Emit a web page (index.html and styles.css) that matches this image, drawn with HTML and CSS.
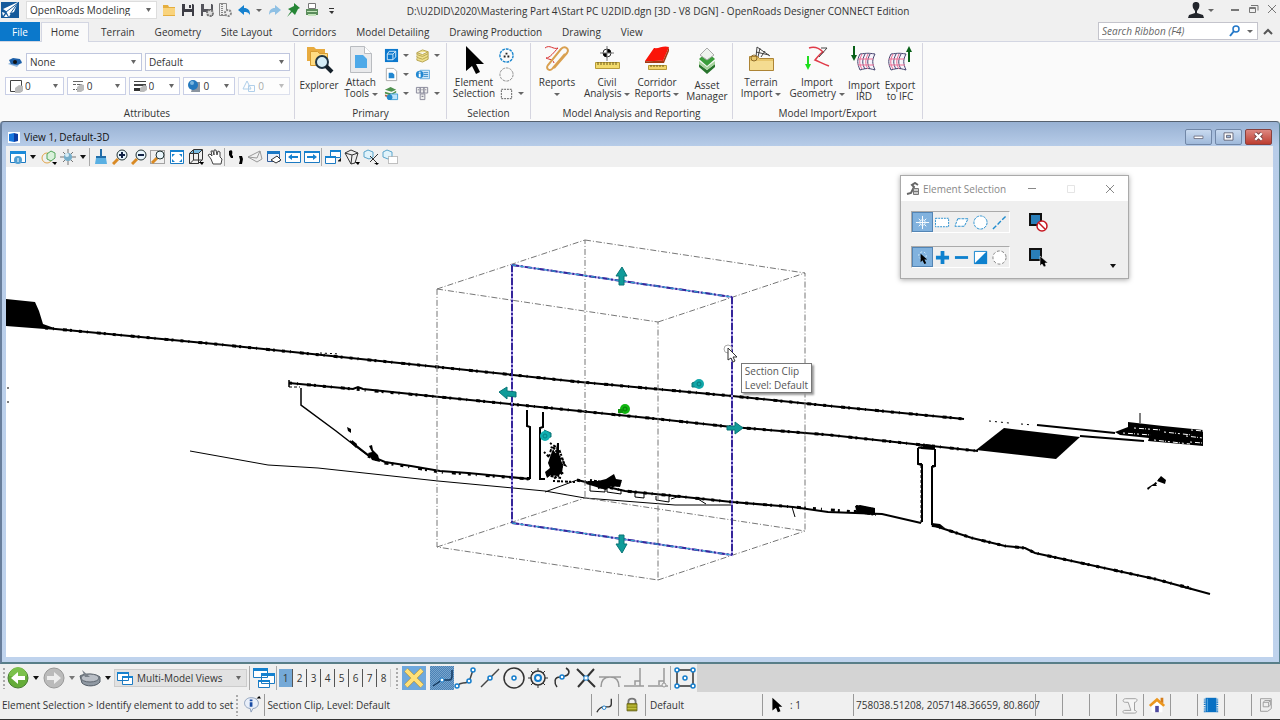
FILE: index.html
```html
<!DOCTYPE html>
<html lang="en">
<head>
  <meta charset="UTF-8" />
  <meta name="viewport" content="width=device-width, initial-scale=1.0"/>
  <title>OpenRoads Designer CONNECT Edition</title>
  <link rel="stylesheet" href="styles.css">
</head>
<body>

  <!-- TITLE BAR -->
  <header class="titlebar">
    <div class="quick-access">
      <svg class="logo" viewBox="0 0 18 18"><path fill="#155a9b" d="M0 1h18v16H0z"/><path fill="#fff" d="M17 1 2 8l3 2 3 6 2-4 3-1zM1 11l3 1-2 3zM5 13l2 3H3z"/><path stroke="#155a9b" fill="none" d="M5 11 17 2 9 13"/></svg>
      <select class="combo workflow" aria-label="Workflow"><option>OpenRoads Modeling</option></select>
      <button class="qa" aria-label="Open"><svg viewBox="0 0 16 16"><path fill="#e5ae3f" d="M2 3h5l1 2h6v9H2z"/><path fill="#f9d37c" d="M2 6h12v7H2z"/></svg></button>
      <button class="qa" aria-label="Save"><svg viewBox="0 0 16 16"><path fill="#3d3d45" d="M2 2h11l1 1v11H2z"/><path fill="#eee" d="M5 2h7v5H5zM4 10h8v4H4z"/><path fill="#3d3d45" d="M9 3h2v3H9z"/></svg></button>
      <button class="qa" aria-label="Save settings"><svg viewBox="0 0 16 16"><path fill="#55555c" d="M2 2h11l1 1v11H2z"/><path fill="#eee" d="M5 2h7v5H5zM4 10h4v4H4z"/><circle cx="11" cy="11" r="3" fill="#ddd" stroke="#777" stroke-width="2" stroke-dasharray="2 1"/></svg></button>
      <button class="qa" aria-label="Compress"><svg viewBox="0 0 16 16"><path fill="#eee" stroke="#888" d="M2.500 1.500h7v12h-7z"/><path stroke="#888" stroke-width="2" stroke-dasharray="1 1" d="M5 2v11"/><circle cx="11" cy="11" r="3" fill="#eee" stroke="#888" stroke-width="2" stroke-dasharray="2 1"/></svg></button>
      <button class="qa" aria-label="Undo"><svg viewBox="0 0 16 16"><path fill="#1581cf" d="M2 8l6-5v3c4 0 6 2 6 7-2-3-3-3-6-3v3z"/></svg></button>
      <span class="caret"></span>
      <button class="qa" aria-label="Redo"><svg viewBox="0 0 16 16"><path fill="#8fc0e4" d="M14 8L8 3v3c-4 0-6 2-6 7 2-3 3-3 6-3v3z"/></svg></button>
      <button class="qa" aria-label="Pin"><svg viewBox="0 0 16 16"><path fill="#268636" d="M9 1l6 5-2 1-2 4-1 2-3-3-5 5 4-6-3-2 2-1 4-2z"/></svg></button>
      <button class="qa" aria-label="Print"><svg viewBox="0 0 16 16"><path fill="#fff" stroke="#777" d="M4.500 1.500h7v5h-7z"/><path fill="#5b8d5c" d="M2 7h12v6H2z"/><path fill="#c3e4bb" d="M3 9h10v1H3zM4 12h8v2H4z"/></svg></button>
      <button class="qa" aria-label="Customize"><svg viewBox="0 0 16 16"><path fill="#333" d="M6 6h5v1H6zM6 9h5l-2 3z"/></svg></button>
    </div>
    <h1 class="doc-title">D:\U2DID\2020\Mastering Part 4\Start PC U2DID.dgn [3D - V8 DGN] - OpenRoads Designer CONNECT Edition</h1>
    <div class="win-controls">
      <button aria-label="Account"><svg viewBox="0 0 16 16"><path fill="#22252b" d="M8 0c3 0 4 2 3 6L9 9v2l6 2 1 3H0l1-3 6-2V9L5 6C4 2 5 0 8 0z"/></svg></button>
      <span class="caret"></span>
      <button aria-label="Minimize"><svg viewBox="0 0 16 16"><path fill="#777" d="M5 7h8v2H5z"/></svg></button>
      <button aria-label="Restore"><svg viewBox="0 0 16 16"><path fill="none" stroke="#777" d="M4.500 5.500h6v5h-6zM4 6.500h7M6 3.500h7v5"/></svg></button>
      <button aria-label="Close"><svg viewBox="0 0 16 16"><path stroke="#777" d="M4 3l8 8M12 3l-8 8"/></svg></button>
    </div>
  </header>

  <!-- RIBBON TABS -->
  <nav class="tabs">
    <a class="tab file" href="#">File</a>
    <a class="tab active" href="#">Home</a>
    <a class="tab" href="#">Terrain</a>
    <a class="tab" href="#">Geometry</a>
    <a class="tab" href="#">Site Layout</a>
    <a class="tab" href="#">Corridors</a>
    <a class="tab" href="#">Model Detailing</a>
    <a class="tab" href="#">Drawing Production</a>
    <a class="tab" href="#">Drawing</a>
    <a class="tab" href="#">View</a>
    <div class="search">
      <input type="text" placeholder="Search Ribbon (F4)" aria-label="Search Ribbon">
      <svg viewBox="0 0 12 12"><circle cx="7" cy="4" r="3" fill="none" stroke="#2277c8" stroke-width="1.500"/><path stroke="#2277c8" stroke-width="2" d="M5 6l-4 5"/></svg>
      <span class="caret"></span>
    </div>
    <button class="collapse" aria-label="Collapse ribbon"><svg viewBox="0 0 12 12"><path fill="none" stroke="#555" stroke-width="2" d="M2 8l4-4 4 4"/></svg></button>
  </nav>

  <!-- RIBBON -->
  <section class="ribbon">
    <div class="group attributes">
      <div class="attr-grid">
        <div class="attr-row">
          <svg class="attr-icon" viewBox="0 0 16 16"><path fill="#8eb6df" d="M1 10l8-5 6 2-5 6z"/><path fill="#1d5fa8" d="M2 6l4-2 7 1 2 4-5 2-6-1z"/><circle cx="8" cy="8" r="2" fill="#111"/></svg>
          <select class="combo template" aria-label="Template"><option>None</option></select>
          <select class="combo level" aria-label="Level"><option>Default</option></select>
        </div>
        <div class="attr-row second">
          <label class="attr wide"><svg viewBox="0 0 16 16"><path fill="#fff" stroke="#444" d="M2.500 2.500h11v11h-11z"/><path fill="#bbb" d="M7 10l4-3 4 1v5l-3 2H7z"/></svg><select aria-label="Color"><option>0</option></select></label>
          <label class="attr wide"><svg viewBox="0 0 16 16"><path stroke="#666" d="M3 3.500h10M3 6.500h3m1 0h5M3 11.500h2m1 0h3"/><path fill="#bbb" d="M7 9l4-3 3 1v5l-3 2H7z"/></svg><select aria-label="Line style"><option>0</option></select></label>
          <label class="attr"><svg viewBox="0 0 16 16"><path stroke="#444" d="M2 3.500h12"/><path stroke="#444" stroke-width="2" d="M2 7h12"/><path stroke="#333" stroke-width="3" d="M2 11.500h9"/><path fill="#bbb" d="M8 10l4-3 3 1v4l-3 2H8z"/></svg><select aria-label="Weight"><option>0</option></select></label>
          <label class="attr"><svg viewBox="0 0 16 16"><path fill="#8b95a0" d="M8 4h6v10H5z"/><circle cx="7" cy="7" r="5" fill="#2378bd"/><circle cx="6" cy="5" r="2" fill="#78b5de"/></svg><select aria-label="Transparency"><option>0</option></select></label>
          <label class="attr muted"><svg viewBox="0 0 16 16"><path fill="none" stroke="#7fb4e0" d="M2 11l4-8 4 8zM7.500 7.500h6v6h-6z"/></svg><select aria-label="Priority" disabled><option>0</option></select></label>
        </div>
      </div>
      <h2>Attributes</h2>
    </div>

    <div class="group primary">
      <div class="tools">
        <button class="big explorer"><svg viewBox="0 0 32 32"><path fill="#e8ab3f" d="M4 3h7l2 2h9v12H4z"/><path fill="#ffdc83" stroke="#d69c32" d="M7.500 7.500h7l2 2h8v12h-17z"/><circle cx="19" cy="18" r="6" fill="#d5edf8" stroke="#203545" stroke-width="2"/><path stroke="#15202a" stroke-width="4" d="M23 22l6 6"/></svg><span>Explorer</span></button>
        <button class="big menu attach"><svg viewBox="0 0 32 32"><path fill="#e9eaec" stroke="#b9bcc0" d="M5.500 2.500h14l7 7v19h-21z"/><path fill="#fff" stroke="#b9bcc0" d="M19.500 2.500v7h7"/><path fill="#4ea9e8" d="M10 11h8l4 4v9H10z"/></svg><span>Attach<br>Tools <i class="caret"></i></span></button>
        <div class="minis">
          <button aria-label="Models"><svg viewBox="0 0 16 16"><path fill="#0b78cd" d="M1 1h14v14H1z"/><path fill="none" stroke="#d7ecfb" d="M3.500 6.500h6v6h-6zM3.500 6.500l2-3h7l-3 3m0 6l3-3v-6"/></svg><i class="caret"></i></button>
          <button aria-label="Level display"><svg viewBox="0 0 16 16"><path fill="#efe08c" stroke="#b5a24e" d="M2 5l6-3 6 2-6 3zM2 5v2l6 2 6-3V4M2 8v2l6 2 6-3V6M2 11v2l6 2 6-3V9"/></svg><i class="caret"></i></button>
          <button aria-label="References"><svg viewBox="0 0 16 16"><path fill="#fff" stroke="#aaa" d="M2.500 1.500h8l3 3v10h-11z"/><path fill="#2187d0" d="M5 6h4l2 2v4H5z"/></svg><i class="caret"></i></button>
          <button aria-label="Properties"><svg viewBox="0 0 16 16"><path fill="#d2eafa" stroke="#65addd" d="M5.500 3.500h10v9h-10z"/><path stroke="#388bc8" d="M9 6h5m-5 2h5m-5 2h5"/><circle cx="5" cy="8" r="4" fill="#2188d2"/><path stroke="#fff" stroke-width="2" d="M5 5v1m0 1v4"/></svg></button>
          <button aria-label="Layers"><svg viewBox="0 0 16 16"><path fill="#4f914e" d="M1 4l6-3 6 3-5 2zM1 6l7 2 5-3v2l-6 3-6-2z"/><path fill="#b3624a" d="M1 9l6 2v2l-6-2z"/><path fill="#bce3fa" stroke="#3d9ed4" d="M6.500 8.500h8v6h-8z"/><circle cx="6" cy="12" r="3" fill="#258acb"/></svg><i class="caret"></i></button>
          <button aria-label="Key-in"><svg viewBox="0 0 16 16"><path fill="#eee" stroke="#889" d="M1.500 1.500h4v6h-4zM5.500 1.500h4v6h-4zM9.500 1.500h4v6h-4zM5.500 8.500h5v6h-5z"/><path stroke="#667" d="M3 4h1m3 0h1m3 0h1M7 11h2"/></svg><i class="caret"></i></button>
        </div>
      </div>
      <h2>Primary</h2>
    </div>

    <div class="group selection">
      <div class="tools">
        <button class="big menu"><svg viewBox="0 0 32 32"><path d="M8 2v25l6-5 4 8 4-2-4-8h8z"/></svg><span>Element<br>Selection</span></button>
        <div class="minis single">
          <button aria-label="Select all"><svg viewBox="0 0 16 16"><circle cx="8" cy="8" r="7" fill="none" stroke="#1c87cf" stroke-width="1.500" stroke-dasharray="3 1"/><path stroke="#222" stroke-width="2" d="M5 9h2m2 0h2M7 6h2"/></svg></button>
          <button aria-label="Select none"><svg viewBox="0 0 16 16"><circle cx="8" cy="8" r="7" fill="none" stroke="#888" stroke-dasharray="3 1"/></svg></button>
          <button aria-label="Fence"><svg viewBox="0 0 16 16"><path fill="none" stroke="#555" stroke-dasharray="2 1" d="M2.500 3.500h11v10h-11z"/></svg><i class="caret"></i></button>
        </div>
      </div>
      <h2>Selection</h2>
    </div>

    <div class="group analysis">
      <div class="tools">
        <button class="big menu"><svg viewBox="0 0 32 32"><path fill="none" stroke="#d93334" d="M4 4c5-4 8 2 13 0-4 4-8 10-12 10 4 2 7 1 8 5"/><path fill="none" stroke="#d9a050" stroke-width="2" d="M24 10l-12 14c-3 4-8 1-5-3L20 5c4-4 9 0 6 4L13 24"/></svg><span>Reports<br><i class="caret"></i></span></button>
        <button class="big menu"><svg viewBox="0 0 32 32"><circle cx="16" cy="9" r="4" fill="#fff" stroke="#333"/><path d="M16 5a4 4 0 0 1 4 4h-8a4 4 0 0 0 4 4z"/><path stroke="#777" d="M9 9h14M16 2v15"/><path fill="#f2da6b" stroke="#b79b38" d="M4.500 18.500h24v6h-24z"/><path stroke="#6d5a1b" d="M7 18v3m3-3v3m3-3v3m3-3v3m3-3v3m3-3v3m3-3v3"/></svg><span>Civil<br>Analysis <i class="caret"></i></span></button>
        <button class="big menu"><svg viewBox="0 0 32 32"><path fill="#fa1408" d="M4 17l9-13c5 1 9-3 15-1L22 17c-6-1-12 1-18 0z"/><path fill="#a03a14" d="M4 17c6 1 12-1 18 0l6-14v4l-5 12H4z"/><path fill="#f1d568" stroke="#b79b38" d="M7.500 21.500h18v4h-18z"/><path stroke="#6d5a1b" d="M10 21v2m3-2v2m3-2v2m3-2v2m3-2v2"/></svg><span>Corridor<br>Reports <i class="caret"></i></span></button>
        <button class="big asset"><svg viewBox="0 0 32 32"><path fill="#29742d" d="M8 20l8 6 8-6v3l-8 7-8-7z"/><path fill="#a7d39d" d="M8 17l8 6 8-6v3l-8 6-8-6z"/><path fill="#3b9d3b" d="M8 15l8-7 8 7-8 7z"/><path fill="#eff3ee" stroke="#aaa" d="M9 11l7-7 7 7-7 5z"/></svg><span>Asset<br>Manager</span></button>
      </div>
      <h2>Model Analysis and Reporting</h2>
    </div>

    <div class="group import">
      <div class="tools">
        <button class="big menu"><svg viewBox="0 0 32 32"><path fill="none" stroke="#444" d="M11 13l1-10 13 9M11 8l13 3M15 4l-2 9m7-6-4 6"/><path fill="#e8c76d" stroke="#ad8435" d="M4.500 12.500h8l2 2h14v12h-24z"/><path fill="#f4dc91" d="M5 17h23v9H5z"/><circle cx="9" cy="14" r="3" fill="none" stroke="#8d6a27"/></svg><span>Terrain<br>Import <i class="caret"></i></span></button>
        <button class="big menu geometry"><svg viewBox="0 0 32 32"><path fill="none" stroke="#e03a48" stroke-width="1.500" d="M8 4c6-2 10 0 14 4-4 2-6 6-8 8 5 2 8 4 14 6"/><path fill="none" stroke="#444" d="M20 4h6l-8 9"/><path stroke="#22dd22" stroke-width="2" d="M7 12v11"/><path fill="#1ce01c" d="M4 20h6l-3 6z"/></svg><span>Import<br>Geometry <i class="caret"></i></span></button>
        <button class="big"><svg viewBox="0 0 32 32"><path stroke="#086018" stroke-width="2" d="M6 2v11"/><path fill="#086018" d="M3 11h6l-3 6z"/><path fill="#f6f3fb" stroke="#46446e" d="M12 10c8-1 8-1 15 0-3 6-3 9 0 16-7-2-8-2-15 0-3-7-3-10 0-16zM17 10c-3 6-3 10 0 15M22 10c-3 6-3 10 0 15"/><path fill="none" stroke="#ee6f94" d="M10 15h15M10 21h16M14 10c-3 6-3 10 0 15M20 10c-3 6-3 10 0 15"/></svg><span>Import<br>IRD</span></button>
        <button class="big"><svg viewBox="0 0 32 32"><path fill="#f6f3fb" stroke="#46446e" d="M7 10c8-1 8-1 15 0-3 6-3 9 0 16-7-2-8-2-15 0-3-7-3-10 0-16zM12 10c-3 6-3 10 0 15M17 10c-3 6-3 10 0 15"/><path fill="none" stroke="#ee6f94" d="M5 15h15M5 21h16M9 10c-3 6-3 10 0 15M15 10c-3 6-3 10 0 15"/><path stroke="#086018" stroke-width="2" d="M25 5v13"/><path fill="#086018" d="M22 8h6l-3-6z"/></svg><span>Export<br>to IFC</span></button>
      </div>
      <h2>Model Import/Export</h2>
    </div>
  </section>

  <!-- VIEW WINDOW -->
  <main class="view">
    <div class="view-title">
      <svg viewBox="0 0 14 14"><path fill="#fff" d="M1 2h12v11H1z"/><path fill="#1776dd" d="M2 4l5-1v9l-5-1z"/><path fill="#0c3ea4" d="M7 3l4 1v7l-4 1z"/></svg>
      <h2>View 1, Default-3D</h2>
      <button class="vbtn" aria-label="Minimize view"><svg viewBox="0 0 16 16"><path fill="#fff" stroke="#667" d="M2.500 7.500h11v3h-11z"/></svg></button>
      <button class="vbtn" aria-label="Maximize view"><svg viewBox="0 0 16 16"><path fill="#fff" stroke="#556" d="M2.500 3.500h11v9h-11z"/><path fill="#9db5d5" stroke="#556" d="M5.500 6.500h5v3h-5z"/></svg></button>
      <button class="vbtn close" aria-label="Close view"><svg viewBox="0 0 16 16"><path stroke="#754143" stroke-width="5" d="M4 4l8 8M12 4l-8 8"/><path stroke="#fff" stroke-width="3" d="M4 4l8 8M12 4l-8 8"/></svg></button>
    </div>

    <div class="view-tools">
      <button aria-label="View attributes"><svg viewBox="0 0 16 16"><path fill="#fff" stroke="#1c7ac2" d="M.5 2.500h15v11H.5z"/><path fill="#1c8bda" d="M0 2h16v3H0z"/><circle cx="8" cy="11" r="4" fill="#4f9ed2"/><path stroke="#fff" d="M8 9v4m4-3h3"/></svg></button>
      <span class="caret dark"></span>
      <button aria-label="Display style"><svg viewBox="0 0 16 16"><circle cx="6" cy="9" r="5" fill="none" stroke="#e0a64b"/><path fill="#d9f1db" stroke="#52a65b" d="M6 5l4-3 4 2v5l-4 3-4-2z"/><path d="M11 13h5l-2 3z"/></svg></button>
      <button aria-label="Brightness"><svg viewBox="0 0 16 16"><path stroke="#777" d="M8 0v16M0 8h16M3 3l10 10M13 3L3 13"/><circle cx="8" cy="8" r="4" fill="#77aeca"/><circle cx="7" cy="6" r="2" fill="#d8edf6"/></svg></button>
      <span class="caret dark"></span>
      <span class="sep"></span>
      <button aria-label="Update view"><svg viewBox="0 0 16 16"><path fill="#216da8" d="M7 0h2v7h4v4H3V7h4z"/><path fill="#5ab0e3" d="M3 9h10l1 6H2z"/></svg></button>
      <button aria-label="Zoom in"><svg viewBox="0 0 16 16"><path stroke="#d98a24" stroke-width="3" d="M6 10l-5 5"/><circle cx="10" cy="6" r="5" fill="#e9f6fd" stroke="#233"/><path stroke="#124" stroke-width="2" d="M7 6h6M10 3v6"/></svg></button>
      <button aria-label="Zoom out"><svg viewBox="0 0 16 16"><path stroke="#d98a24" stroke-width="3" d="M6 10l-5 5"/><circle cx="10" cy="6" r="5" fill="#e9f6fd" stroke="#233"/><path stroke="#124" stroke-width="2" d="M7 6h6"/></svg></button>
      <button aria-label="Window area"><svg viewBox="0 0 16 16"><path fill="none" stroke="#555" stroke-dasharray="1 1" d="M.5 1.500h14v13H.5z"/><path stroke="#d98a24" stroke-width="3" d="M7 9l-5 5"/><circle cx="10" cy="6" r="4" fill="#e9f6fd" stroke="#233"/></svg></button>
      <button aria-label="Fit view"><svg viewBox="0 0 16 16"><path fill="#fff" stroke="#1c7ac2" d="M1.500 1.500h13v13h-13z"/><path fill="#1581cf" d="M1 1h14v2H1zM3 5h3L3 8zm10 0h-3l3 3zM3 13h3l-3-3zm10 0h-3l3-3z"/></svg></button>
      <button aria-label="Rotate view"><svg viewBox="0 0 16 16"><path fill="#76bae0" d="M1 4l4-3h10l-4 3z"/><path fill="none" stroke="#333" d="M1.500 4.500h9v10h-9zM1.500 4.500l4-4h9l-4 4m0 10l4-4V1M5.500 1v10h9m-9 0l-4 4"/><path d="M11 13h5l-2 3z"/></svg></button>
      <button aria-label="Pan view"><svg viewBox="0 0 16 16"><path fill="#fff" stroke="#444" d="M6 15L4 10 1 6l2-1 2 2-1-5 2 0 1 4V1h2l1 5 1-4 2 1v5l2 2-1 5z"/></svg></button>
      <span class="sep"></span>
      <button aria-label="Walk"><svg viewBox="0 0 16 16"><path d="M1 2c3-2 4 0 3 4l1 1v2H3L1 6zM11 7h3l1 3-1 5h-3l1-4z"/></svg></button>
      <button aria-label="Fly"><svg viewBox="0 0 16 16"><path fill="#eee" stroke="#999" d="M1 8l12-6 2 8-5 3zM1 8l9 1 3-7"/></svg></button>
      <button aria-label="Navigate"><svg viewBox="0 0 16 16"><path fill="#eaf0fb" stroke="#365f9c" d="M1.500 2.500h12v10h-12z"/><path fill="#1a77c5" d="M1 2h13v3H1z"/><path fill="#fff" stroke="#333" d="M5 11l6-4 4 4-5 3z"/></svg></button>
      <button aria-label="View previous"><svg viewBox="0 0 16 16"><path fill="#fff" stroke="#1c7ac2" d="M.5 2.500h15v11H.5z"/><path fill="#1581cf" d="M0 2h16v2H0zM3 8l4-3v2h6v2H7v2z"/></svg></button>
      <button aria-label="View next"><svg viewBox="0 0 16 16"><path fill="#fff" stroke="#1c7ac2" d="M.5 2.500h15v11H.5z"/><path fill="#1581cf" d="M0 2h16v2H0zM13 8L9 5v2H3v2h6v2z"/></svg></button>
      <span class="sep"></span>
      <button aria-label="Copy view"><svg viewBox="0 0 16 16"><path fill="#fff" stroke="#1c7ac2" d="M5.500 1.500h10v7h-10zM.5 7.500h10v7H.5z"/><path fill="#1581cf" d="M5 1h11v2H5zM0 7h11v2H0z"/><path stroke="#222" d="M13 12h3V9"/></svg></button>
      <button aria-label="Perspective"><svg viewBox="0 0 16 16"><path fill="#eee" stroke="#333" d="M1 4l6-3 7 3-3 10-4 1zM1 4l7 2 6-2M8 6L7 15"/><path d="M11 13h5l-2 3z"/></svg></button>
      <button aria-label="Clip volume"><svg viewBox="0 0 16 16"><path fill="#e0f3fb" stroke="#5aa5cc" d="M1 3l4-2 5 2v5l-4 2-5-2z"/><path stroke="#333" d="M7 13l8-8M7 7l7 7"/><path d="M11 14h5l-2 2z"/></svg></button>
      <button aria-label="Clip mask"><svg viewBox="0 0 16 16"><path fill="#e0f3fb" stroke="#5aa5cc" d="M1 3l4-2 5 2v5l-4 2-5-2z"/><path fill="#fff" stroke="#888" stroke-dasharray="1 1" d="M6.500 7.500h9v7h-9z"/></svg></button>
    </div>

    <div class="canvas">
      <svg class="drawing" viewBox="6 167 1267 490" role="img" aria-label="Bridge section">
        <!-- road surface and deck -->
        <path d="M6 299l29 3 4 9 4 13 14 5-12 0-39-3z"/>
        <g class="cloud">
          <path d="M45 328l170 16 223 23 142 15 152 14 98 10 134 13"/>
          <path d="M289 383l64 6 5-2 5 2 77 8 90 9 128 13 74 8 98 8 148 16"/>
          <path d="M350 441l18 14 17 7 26 4 29 5 28 2 62 6"/>
          <path d="M577 480l48 11 50 5 57 6 61 5 35 5 54 2 39 9"/>
          <path d="M932 525l40 13 33 8 20 2 10 5 60 13 60 13 55 15"/>
        </g>
        <g class="rough">
          <path d="M45 328l170 16 223 23 142 15 152 14 98 10 134 13"/>
          <path d="M289 383l64 6 87 8 90 9 128 13 74 8 98 8 148 16"/>
          <path d="M368 456l17 7 26 4 29 5 28 2 62 5M577 480l48 11 50 5 57 6 61 5 87 7"/>
          <path d="M932 525l40 13 33 8 20 2 10 5 60 13 60 13 35 9"/>
        </g>
        <g class="line">
          <path d="M190 451l78 14 50 3 120 13 107 10 40 7 90 7h57"/>
          <path d="M545 492l32-12M792 507l3 10M698 499l8 5"/>
        </g>
        <path class="edge" d="M289 380v7M301 388v17l35 26 18 14 16 12"/>
        <g class="pier">
          <path d="M527 410v16l3 1v51h-3M543 412v15l-3 1v51h5"/>
          <path d="M918 448v16l4 1v57M935 449v17l-3 1v58M918 448l4-1m9 1h4M918 464h4m10 2h3"/>
        </g>
        <path class="line" stroke-dasharray="3 2" d="M921 465v58M289 387h11"/>
        <path d="M920 448l6-4 7 1 1 5-13-1zM932 523l8 1 5 4-13-1zM347 427l4 2 0 4-3-2zM368 453l4-1-3-6 3-1 1 5 5 5 2 7-8-2zM352 440l5 4-1 4-4-4z"/>
        <!-- abutment and barriers -->
        <path d="M1004 428l76 9-24 22-80-9z"/>
        <path class="line" stroke-dasharray="2 4" d="M989 421l20 2M1021 424l12 1"/>
        <path class="bold" d="M1037 425l78 8M1080 436l64 5"/>
        <path d="M1115 432l13-5v-5l35 4 40 4v16l-55-5 1-3-29-3z"/>
        <path class="line" d="M1140 413v10"/>
        <path class="gaps" d="M1134 428l27 2M1164 432l28 3M1123 433l28 2M1154 440l36 4M1191 430l12 1M1186 436l17 2M1190 442l12 1"/>
        <path d="M1147 488l8-5 2 3-5 0-4 4zM1157 481l4-5 5 4-1 4z"/>
        <path class="bold" stroke-dasharray="2 3" d="M1180 586l12 3M1155 484l5-5"/>
        <path class="line" stroke-dasharray="2 3" d="M320 353l20 1"/>
        <!-- vegetation, scattered points -->
        <path d="M550 457l3-8 3 5 1-11 2 0v10l2 7 2 6-1 7-5 3-6-1-4 3-2-6 5-4-2-5z"/>
        <path class="bush" d="M544 452l5 5 3-11 5 6-6 9 9-4 5 8-14-5 7 15 5-11-14 6 6 8 9-6M550 443l9 6 5 14-18 12 15 3M553 481l22 1"/>
        <path d="M588 481l10 0 8-2 8-5 2 5 6 1-2 7-10-1-4 4-13-4-7-2zM855 506l5-1 15 3v7l-18-2z"/>
        <path class="bush" d="M590 480l30 5-22 3 23-6M856 506l18 3-20 2 22 4"/>
        <path class="line" d="M590 485v6l15 1v-4h2v4l14 2v-5M635 493v4l9 1v-6M656 496v4l13 2v-5M671 499l9-3"/>
        <path class="line" stroke-dasharray="2 12" d="M8 387v22"/>

        <!-- clip volume -->
        <g class="volume">
          <path d="M585 240l220 33v258l-220-33zM437 289l221 33v258l-221-33zM437 289l148-49M658 322l147-49M437 547l148-49M658 580l147-49"/>
        </g>
        <path class="section-glow" d="M512 265l220 32v258l-220-32z"/>
        <path class="section" d="M512 265v258M732 297v258"/>
        <path class="section" d="M512 265l220 32M512 523l220 32"/>
        <path class="section-top" d="M512 265l220 32M512 523l220 32"/>

        <!-- handles -->
        <g fill="#109b99" stroke="#087576">
          <path d="M616 276l6-9 5 9-3 0v9h-5v-9zM616 544l6 9 5-9-3 0v-9h-5v9z"/>
          <path d="M499 392l8-5v4l9 1v5l-9-1v3zM743 428l-8-6v4h-8v4h8v4z"/>
          <path d="M544 430l7 3v4l-7 1M692 383l5-2v6h-5z"/>
        </g>
        <circle cx="545" cy="436" r="5" fill="#11aeb0"/><circle cx="545" cy="436" r="2" fill="none" stroke="#088184"/>
        <circle cx="699" cy="384" r="5" fill="#11a7aa"/><circle cx="699" cy="384" r="2" fill="none" stroke="#087a7b"/>
        <circle cx="625" cy="409" r="5" fill="#11b711"/><circle cx="625" cy="409" r="2" fill="none" stroke="#087b08"/>
        <path fill="#109410" d="M618 409h5v4h-5z"/>
        <circle cx="728" cy="349" r="4" fill="none" stroke="#aaa"/>
        <path fill="#fff" stroke="#333" d="M728 348v12l3-2 2 4 2-1-2-4h4z"/>
      </svg>

      <div class="tooltip">Section Clip<br>Level: Default</div>

      <section class="dialog">
        <header>
          <svg viewBox="0 0 14 14"><path fill="none" stroke="#666" stroke-width="2" d="M1 12l4-1 3-6-2-2 3-2 3 2"/><path fill="#ccc" stroke="#777" d="M7.500 6.500h5v6h-5z"/><path stroke="#777" d="M8 9.500h4"/></svg>
          <h2>Element Selection</h2>
          <button aria-label="Minimize dialog"><svg viewBox="0 0 12 12"><path stroke="#888" d="M2 5.500h8"/></svg></button>
          <button aria-label="Maximize dialog"><svg viewBox="0 0 12 12"><path fill="none" stroke="#e5e5e5" d="M2.500 2.500h7v7h-7z"/></svg></button>
          <button aria-label="Close dialog"><svg viewBox="0 0 12 12"><path stroke="#888" d="M2 2l8 8M10 2l-8 8"/></svg></button>
        </header>
        <div class="dialog-body">
          <div class="dialog-row">
            <div class="strip">
              <button class="on" aria-label="Individual"><svg viewBox="0 0 16 16"><path stroke="#fff" d="M8 1v14M1 8h14M4 4l2 2m4 4l2 2M12 4l-2 2m-4 4l-2 2"/><circle cx="8" cy="8" r="3" fill="none" stroke="#e7f4fc"/></svg></button>
              <button aria-label="Block"><svg viewBox="0 0 16 16"><path fill="#fff" stroke="#218cce" stroke-dasharray="2 1" d="M.5 3.500h14v9H.5z"/></svg></button>
              <button aria-label="Shape"><svg viewBox="0 0 16 16"><path fill="#fff" stroke="#218cce" stroke-dasharray="3 1" d="M4 4h11l-4 8H1z"/></svg></button>
              <button aria-label="Circle"><svg viewBox="0 0 16 16"><circle cx="8" cy="8" r="7" fill="#fff" stroke="#218cce" stroke-dasharray="3 1"/></svg></button>
              <button aria-label="Line"><svg viewBox="0 0 16 16"><path stroke="#218cce" stroke-width="1.500" stroke-dasharray="5 2" d="M1 15L15 1"/></svg></button>
            </div>
            <button class="square" aria-label="Disable handles"><svg viewBox="0 0 20 20"><path fill="#2a7fba" stroke="#111" stroke-width="2" d="M2 2h11v11H2z"/><circle cx="14" cy="14" r="5" fill="#fff" stroke="#c71721" stroke-width="1.500"/><path stroke="#c71721" stroke-width="1.500" d="M11 11l6 6"/></svg></button>
          </div>
          <div class="dialog-row">
            <div class="strip">
              <button class="on" aria-label="New"><svg viewBox="0 0 16 16"><circle cx="8" cy="6" r="4" fill="none" stroke="#ddf1fc" stroke-dasharray="2 2"/><path d="M6 4v9l2-2 2 4 2-1-2-4h3z"/></svg></button>
              <button aria-label="Add"><svg viewBox="0 0 16 16"><path stroke="#0e81ce" stroke-width="4" d="M8 1v14M1 8h14"/></svg></button>
              <button aria-label="Subtract"><svg viewBox="0 0 16 16"><path stroke="#0e81ce" stroke-width="3" d="M1 8h14"/></svg></button>
              <button aria-label="Invert"><svg viewBox="0 0 16 16"><path fill="#fff" stroke="#0e81ce" d="M1.500 1.500h13v13h-13z"/><path fill="#0e81ce" d="M15 1v14H1z"/></svg></button>
              <button aria-label="Clear"><svg viewBox="0 0 16 16"><circle cx="8" cy="8" r="7" fill="#fff" stroke="#777" stroke-dasharray="3 2"/></svg></button>
            </div>
            <button class="square" aria-label="Select all"><svg viewBox="0 0 20 20"><path fill="#2a7fba" stroke="#111" stroke-width="2" d="M2 2h11v11H2z"/><path stroke="#fff" stroke-width=".5" d="M12 9v10l2-2 2 3 2-1-1-3h3z"/></svg></button>
            <button class="more" aria-label="Show more"><i class="caret dark"></i></button>
          </div>
        </div>
      </section>
    </div>
  </main>

  <!-- BOTTOM TOOLBAR -->
  <div class="bottom-tools">
    <div class="docked">
      <span class="grip"></span>
      <button class="nav" aria-label="Back"><svg viewBox="0 0 22 22"><circle cx="11" cy="11" r="10" fill="#64ac38" stroke="#477d31"/><path fill="#7bc14c" d="M2 9a9 9 0 0 1 18 0z"/><path fill="#fff" d="M4 11l7-6v4h7v4h-7v4z"/></svg></button>
      <span class="caret dark"></span>
      <button class="nav" aria-label="Forward"><svg viewBox="0 0 22 22"><circle cx="11" cy="11" r="10" fill="#bbb" stroke="#999"/><path fill="#eee" d="M18 11l-7-6v4H4v4h7v4z"/></svg></button>
      <span class="caret dark faded"></span>
      <button class="nav" aria-label="View group tools"><svg viewBox="0 0 22 22"><path fill="#9099a3" stroke="#555e68" d="M1 9c4-3 17-2 20 1v5c-4 5-14 5-18 1z"/><ellipse cx="11" cy="11" rx="9" ry="4" fill="#b9bec6" stroke="#5f6770"/><path fill="#798089" d="M3 3l8 7H6z"/></svg></button>
      <span class="caret dark"></span>
      <label class="view-group"><svg viewBox="0 0 16 16"><path fill="#fff" stroke="#1c7ac2" d="M.5 2.500h11v8H.5zM5.500 6.500h10v8h-10z"/><path fill="#1581cf" d="M0 2h12v2H0zM5 6h11v2H5z"/></svg><select aria-label="View group"><option>Multi-Model Views</option></select></label>
      <span class="sep"></span>
      <button class="nav" aria-label="Manage view groups"><svg viewBox="0 0 22 22"><path fill="#fff" stroke="#1c7ac2" d="M.5 1.500h14v9H.5zM8.500 7.500h13v9h-13zM5.500 13.500h11v7h-11z"/><path fill="#1581cf" d="M0 1h15v3H0zM8 6h14v3H8zM5 13h12v2H5z"/></svg></button>
      <span class="sep"></span>
      <div class="numbers"><button class="on">1</button><button>2</button><button>3</button><button>4</button><button>5</button><button>6</button><button>7</button><button>8</button></div>
      <span class="grip wide"></span>
      <button class="snap accu" aria-label="AccuSnap"><svg viewBox="0 0 24 24"><path stroke="#9a8033" stroke-width="5" d="M4 4l16 16M20 4L4 20"/><path stroke="#ffe078" stroke-width="4" d="M4 4l16 16M20 4L4 20"/></svg></button>
      <button class="snap near" aria-label="Near snap"><svg viewBox="0 0 24 24"><path fill="none" stroke="#153a60" stroke-width="1.500" d="M3 20l9-6h7q3 0 3-4V4"/><circle cx="12" cy="14" r="2" fill="#fff" stroke="#147dcc"/></svg></button>
      <button class="snap" aria-label="Keypoint"><svg viewBox="0 0 24 24"><path fill="none" stroke="#444" stroke-width="1.500" d="M3 20q3-3 6-3 6 0 7-4l3-9"/><g fill="#fff" stroke="#147dcc" stroke-width="1.500"><circle cx="3" cy="20" r="2"/><circle cx="15" cy="15" r="2"/><circle cx="19" cy="4" r="2"/></g></svg></button>
      <button class="snap" aria-label="Midpoint"><svg viewBox="0 0 24 24"><path stroke="#444" stroke-width="1.500" d="M3 21L21 3"/><circle cx="12" cy="12" r="2" fill="#fff" stroke="#147dcc" stroke-width="1.500"/></svg></button>
      <button class="snap" aria-label="Center"><svg viewBox="0 0 24 24"><circle cx="12" cy="12" r="10" fill="none" stroke="#333" stroke-width="1.500"/><circle cx="12" cy="12" r="2" fill="#fff" stroke="#147dcc" stroke-width="1.500"/></svg></button>
      <button class="snap" aria-label="Origin"><svg viewBox="0 0 24 24"><path stroke="#333" d="M12 2v20M2 12h20M5 5l14 14M19 5L5 19"/><circle cx="12" cy="12" r="7" fill="#eee" stroke="#333" stroke-width="1.500"/><circle cx="12" cy="12" r="3" fill="#fff" stroke="#147dcc" stroke-width="2"/></svg></button>
      <button class="snap" aria-label="Bisector"><svg viewBox="0 0 24 24"><path fill="none" stroke="#333" stroke-width="1.500" d="M16 2c5 3 3 7-1 8l-5 1c-6 0-6 6-3 10"/><circle cx="12" cy="11" r="2" fill="#fff" stroke="#147dcc" stroke-width="1.500"/></svg></button>
      <button class="snap" aria-label="Intersection"><svg viewBox="0 0 24 24"><path stroke="#333" stroke-width="2" d="M3 3l18 18M20 3L4 21"/><path fill="#fff" stroke="#147dcc" d="M10 10h4v4h-4z"/></svg></button>
      <button class="snap" aria-label="Tangent"><svg viewBox="0 0 24 24"><path fill="none" stroke="#999" stroke-width="1.500" d="M1 11h22M3 21q0-10 9-10t9 10"/></svg></button>
      <button class="snap" aria-label="Perpendicular"><svg viewBox="0 0 24 24"><path fill="none" stroke="#999" stroke-width="1.500" d="M2 20h20M18 2v18m-5-1v-4h5"/></svg></button>
      <button class="snap" aria-label="Perpendicular from"><svg viewBox="0 0 24 24"><path fill="none" stroke="#999" stroke-width="1.500" d="M2 20h20M18 2v18m-5-1v-4h5"/><circle cx="18" cy="19" r="2" fill="#eee" stroke="#999"/></svg></button>
      <span class="sep"></span>
      <button class="snap" aria-label="Multi-snap"><svg viewBox="0 0 24 24"><path fill="none" stroke="#333" stroke-width="1.500" d="M4 4h16v16H4z"/><g fill="#fff" stroke="#147dcc" stroke-width="1.500"><circle cx="4" cy="4" r="2"/><circle cx="20" cy="4" r="2"/><circle cx="4" cy="20" r="2"/><circle cx="20" cy="20" r="2"/><circle cx="12" cy="12" r="2"/></g></svg></button>
    </div>
  </div>

  <!-- STATUS BAR -->
  <footer class="status">
    <span class="prompt">Element Selection &gt; Identify element to add to set</span>
    <span class="grip"></span>
    <span class="info"><svg viewBox="0 0 20 20"><path fill="#e9eff9" stroke="#8699b5" d="M9 3c11 0 10 12 2 12l-2 4-1-4C-1 14 0 3 9 3z"/><path stroke="#174ba4" stroke-width="3" d="M9 5v2m0 1v5"/><path d="M15 4h5l-2-3z"/></svg></span>
    <span class="message">Section Clip, Level: Default</span>
    <span class="cell"><svg viewBox="0 0 20 20"><path fill="none" stroke="#333" stroke-width="1.500" d="M1 18q3-6 8-6h5q3 0 3-3V3"/><circle cx="9" cy="13" r="2" fill="#fff" stroke="#147dcc"/></svg></span>
    <span class="cell"><svg viewBox="0 0 20 20"><path fill="none" stroke="#777" stroke-width="2" d="M6 9V6c0-4 8-4 8 0v3"/><path fill="#9b991b" stroke="#666318" d="M4.500 8.500h11v8h-11z"/><path stroke="#cbc84d" d="M5 11h10M5 14h10"/></svg></span>
    <span class="cell level-name">Default</span>
    <span class="cell set-count"><svg viewBox="0 0 20 20"><path d="M6 2v14l4-3 2 5 3-1-2-5h4z"/></svg>: 1</span>
    <span class="cell coords">758038.51208, 2057148.36659, 80.8607</span>
    <span class="cell"></span>
    <span class="cell"></span>
    <span class="cell"></span>
    <span class="cell"><svg viewBox="0 0 20 20"><path fill="#f5f5f5" stroke="#999" d="M5 3h11c3 0 2 4-1 4v9c3 0 3 3 0 3H4c-3 0-2-3 0-3h7L8 7H5C1 7 2 3 5 3z"/></svg></span>
    <span class="cell"><svg viewBox="0 0 20 20"><path fill="#fff" d="M4 10l6-5 6 5v8H4z"/><path fill="#ec971e" d="M1 10l9-8 9 8-2 2-7-6-7 6z"/><path fill="#d57c19" d="M14 2h3v6l-3-2z"/><path fill="#4f4ba0" d="M8 11h4v7H8z"/></svg></span>
    <span class="cell"></span>
    <span class="cell"><svg viewBox="0 0 20 20"><path fill="#0870c3" d="M4 2h12v16H4z"/><path stroke="#0870c3" stroke-width="2" stroke-dasharray="1 1" d="M3 3v15M17 3v15"/><path stroke="#5caee5" d="M6 3v14"/></svg></span>
    <span class="cell"></span>
    <span class="cell"><svg viewBox="0 0 20 20"><path fill="#eee" stroke="#999" d="M5 3h12v11l-4 3H5zM8 7h6v5H8zM8 7l2-2h6l-2 2m0 5l2-2V5"/></svg></span>
  </footer>

</body>
</html>
```
FILE: styles.css
```css
* {
  box-sizing: border-box;
}

body {
  margin: 0;
  height: 100vh;
  display: flex;
  flex-direction: column;
  overflow: hidden;
  font-family: "Open Sans", "Noto Sans", sans-serif;
  font-size: 10px;
  line-height: 12px;
  color: #333;
  background-color: #f0f0f0;
}

button,
select,
input {
  font: inherit;
  color: inherit;
  margin: 0;
  padding: 0;
  border: none;
  background: none;
}

h1,
h2 {
  margin: 0;
  font-size: inherit;
  font-weight: normal;
}

svg {
  display: block;
  flex: none;
}

select {
  appearance: none;
  border-radius: 0;
  background: url("data:image/svg+xml,%3Csvg xmlns='http://www.w3.org/2000/svg' width='5' height='4'%3E%3Cpath fill='%23666' d='M0 0h5l-2.5 4z'/%3E%3C/svg%3E") no-repeat right 5px center;
}

.caret {
  display: inline-block;
  flex: none;
  width: 0;
  height: 0;
  border: 3px solid transparent;
  border-top: 3px solid #666;
  border-bottom: none;
  vertical-align: middle;
}

.caret.dark {
  border-top: 4px solid #111;
}

.caret.faded {
  border-top-color: #777;
}

.sep {
  flex: none;
  width: 4px;
  height: 18px;
  border-left: 1px solid #aaa;
}

.grip {
  flex: none;
  width: 4px;
  height: 22px;
  background-image: radial-gradient(#aaa 1px, transparent 1px);
  background-size: 4px 4px;
}

/* title bar */
.titlebar {
  flex: none;
  height: 22px;
  display: flex;
  justify-content: space-between;
}

.quick-access {
  width: 340px;
  height: 20px;
  display: flex;
  align-items: center;
}

.logo {
  width: 18px;
  height: 18px;
  margin: 0 7px 0 1px;
}

.combo {
  height: 18px;
  padding-left: 3px;
  border: 1px solid #bfc6de;
  background-color: #fff;
}

.workflow {
  width: 133px;
  border-color: #ddd;
  margin-right: 3px;
}

.qa svg,
.win-controls svg {
  width: 16px;
  height: 16px;
}

.qa {
  width: 19px;
  display: flex;
  justify-content: center;
}

.quick-access .caret {
  margin: 0 3px;
}

.doc-title {
  padding-top: 5px;
  white-space: nowrap;
}

.win-controls {
  width: 304px;
  height: 20px;
  display: flex;
  align-items: center;
  justify-content: flex-end;
  gap: 3px;
}

.win-controls .caret {
  margin: 0 9px 0 1px;
}

/* ribbon tabs */
.tabs {
  flex: none;
  height: 20px;
  display: flex;
  border-bottom: 1px solid #d3d6e2;
}

.tab {
  padding: 4px 10px 0;
  color: #333;
  text-decoration: none;
  white-space: nowrap;
}

.tab.file {
  padding: 4px 12px 0;
  margin-right: 1px;
  color: #fff;
  background-color: #0b78cb;
}

.tab.active {
  height: 20px;
  padding: 3px 9px 0;
  border: 1px solid #d3d6e2;
  border-bottom: none;
  background-color: #fafafa;
  margin-right: 2px;
}

.search {
  width: 160px;
  height: 18px;
  margin-left: auto;
  display: flex;
  align-items: center;
  gap: 6px;
  padding: 0 4px 0 3px;
  border: 1px solid #c4c4cc;
  background-color: #fff;
}

.search input {
  flex: 1;
  min-width: 0;
  font-style: italic;
}

.search input::placeholder {
  color: #666;
}

.search svg,
.collapse svg {
  width: 12px;
  height: 12px;
}

.collapse {
  width: 22px;
  padding-left: 4px;
}

/* ribbon */
.ribbon {
  flex: none;
  height: 79px;
  display: flex;
  padding-top: 1px;
  background-color: #fafafa;
}

.group {
  flex: none;
  height: 76px;
  display: flex;
  flex-direction: column;
  justify-content: space-between;
  border-right: 1px solid #d5d5e0;
}

.group h2 {
  text-align: center;
}

.attributes {
  width: 295px;
}

.primary {
  width: 152px;
}

.selection {
  width: 84px;
}

.analysis {
  width: 202px;
}

.import {
  width: 190px;
}

.attr-grid {
  padding: 10px 4px 0 5px;
}

.attr-row {
  display: flex;
  gap: 3px;
  align-items: center;
}

.attr-row.second {
  margin-top: 6px;
  justify-content: space-between;
}

.attr-icon {
  width: 16px;
  height: 16px;
  margin: 0 0 0 2px;
}

.template {
  width: 116px;
}

.level {
  flex: 1;
}

.attr {
  width: 52px;
  height: 18px;
  display: flex;
  align-items: center;
  border: 1px solid #c9cfe6;
  background-color: #fff;
}

.attr.wide {
  width: 59px;
}

.attr svg {
  width: 16px;
  height: 16px;
  margin-left: 2px;
}

.attr select {
  flex: 1;
  min-width: 0;
  height: 16px;
  padding-left: 1px;
}

.attr.muted {
  opacity: .6;
}

.tools {
  display: flex;
  padding: 1px 0 0 1px;
}

.big {
  width: 50px;
  height: 58px;
  display: flex;
  flex-direction: column;
  align-items: center;
  line-height: 11px;
  white-space: nowrap;
}

.big svg {
  width: 32px;
  height: 32px;
}

.big span {
  padding-top: 4px;
}

.big.menu span {
  padding-top: 1px;
}

.explorer {
  width: 46px;
}

.attach {
  width: 38px;
}

.asset {
  width: 50px;
}

.analysis .big {
  width: 50px;
}

.import .big {
  width: 36px;
}

.import .menu {
  width: 54px;
}

.import .geometry {
  width: 58px;
}

.selection .big {
  width: 50px;
  margin-left: 1px;
}

.minis {
  display: grid;
  grid-template-columns: 31px 30px;
  grid-auto-rows: 19px;
  padding: 2px 0 0 4px;
}

.minis.single {
  grid-template-columns: 30px;
  padding-left: 0;
}

.minis button {
  display: flex;
  align-items: center;
  gap: 4px;
}

.minis svg {
  width: 15px;
  height: 15px;
}

/* view window */
.view {
  flex: 1;
  min-height: 0;
  display: flex;
  flex-direction: column;
  padding: 0 6px 5px 4px;
  border: 1px solid #557f8d;
  border-left: 2px solid #687e9b;
  border-top-color: #56616f;
  border-bottom: 2px solid #587e88;
  border-radius: 4px 4px 0 0;
  background: linear-gradient(#98b1d3, #b8cde9 25px, #bfd3ed);
}

.view-title {
  flex: none;
  height: 24px;
  display: flex;
  align-items: center;
  gap: 3px;
  padding: 5px 1px 0 1px;
  color: #111;
}

.view-title h2 {
  flex: 1;
}

.view-title > svg {
  width: 14px;
  height: 14px;
}

.vbtn {
  width: 27px;
  height: 16px;
  display: flex;
  align-items: center;
  justify-content: center;
  border: 1px solid #7187a7;
  border-radius: 2px;
  background: linear-gradient(#c9daef, #9fb9da);
}

.vbtn.close {
  border-color: #87413e;
  background: linear-gradient(#dd8780, #bd3d30);
}

.vbtn svg {
  width: 13px;
  height: 13px;
}

.view-tools {
  flex: none;
  height: 21px;
  display: flex;
  align-items: center;
  padding-left: 2px;
  background-color: #f0f0f0;
}

.view-tools button {
  width: 19px;
  display: flex;
  justify-content: center;
}

.view-tools svg {
  width: 16px;
  height: 16px;
}

.view-tools .caret {
  margin: 0 3px;
}

.view-tools .sep {
  width: 2px;
}

.canvas {
  flex: 1;
  min-height: 0;
  position: relative;
  background-color: #fff;
}

.drawing {
  width: 100%;
  height: 100%;
}

.cloud {
  fill: none;
  stroke: #000;
  stroke-width: 2;
}

.rough {
  fill: none;
  stroke: #000;
  stroke-width: 3;
  stroke-dasharray: 3 5 1 9 4 3 2 7;
}

.line {
  fill: none;
  stroke: #000;
  stroke-width: 1;
}

.edge {
  fill: none;
  stroke: #000;
  stroke-width: 1.5;
}

.pier,
.bold {
  fill: none;
  stroke: #000;
  stroke-width: 2;
}

.gaps {
  fill: none;
  stroke: #fff;
  stroke-width: 1;
  stroke-dasharray: 2 3 5 1 1 2;
}

.bush {
  fill: none;
  stroke: #000;
  stroke-width: 2;
  stroke-dasharray: 2 2 3 1;
}

.volume {
  fill: none;
  stroke: #777;
  stroke-dasharray: 6 2 1 2;
}

.section-glow {
  fill: none;
  stroke: #a99be6;
  stroke-width: 2;
}

.section {
  fill: none;
  stroke: #35259a;
  stroke-width: 2;
  stroke-dasharray: 7 2 2 2;
}

.section-top {
  fill: none;
  stroke: #2bb0d1;
  stroke-width: 1;
  stroke-dasharray: 4 4;
}

.tooltip {
  position: absolute;
  left: 58%;
  top: 40%;
  padding: 0 3px;
  line-height: 14px;
  border: 1px solid #777;
  background-color: #fff;
  box-shadow: 2px 2px 2px #999;
  color: #555;
}

.dialog {
  position: absolute;
  top: 8px;
  right: 144px;
  width: 229px;
  border: 1px solid #aaa;
  background-color: #efefef;
  box-shadow: 0 1px 5px #aaa;
}

.dialog header {
  height: 25px;
  display: flex;
  align-items: center;
  padding-left: 5px;
  gap: 3px;
  background-color: #fff;
  color: #888;
}

.dialog header h2 {
  flex: 1;
}

.dialog header button {
  width: 36px;
  display: flex;
  justify-content: center;
}

.dialog header svg {
  width: 12px;
  height: 12px;
}

.dialog header > svg {
  width: 14px;
  height: 14px;
}

.dialog-body {
  display: flex;
  flex-direction: column;
  gap: 13px;
  padding: 10px;
}

.dialog-row {
  display: flex;
  gap: 18px;
}

.strip {
  width: 99px;
  height: 22px;
  display: flex;
  border: 1px solid #fff;
  border-top-color: #aaa;
  border-left-color: #aaa;
}

.strip button {
  flex: 1;
  display: flex;
  align-items: center;
  justify-content: center;
}

.strip svg {
  width: 15px;
  height: 15px;
}

.strip .on {
  border: 1px solid #5385b5;
  background-color: #81b2de;
}

.square svg {
  width: 20px;
  height: 20px;
}

.more {
  display: flex;
  align-items: flex-end;
  margin-left: auto;
  padding: 0 2px;
}

/* bottom toolbar */
.bottom-tools {
  flex: none;
  height: 28px;
  background-color: #d4d4d4;
}

.docked {
  width: max-content;
  height: 28px;
  display: flex;
  align-items: center;
  padding-left: 2px;
  background-color: #f0f0f0;
}

.nav {
  width: 24px;
  display: flex;
  justify-content: center;
}

.nav svg {
  width: 22px;
  height: 22px;
}

.docked .caret {
  margin: 0 3px;
}

.docked .sep {
  width: 3px;
  height: 24px;
}

.view-group {
  width: 133px;
  height: 18px;
  display: flex;
  align-items: center;
  gap: 4px;
  padding-left: 2px;
  margin-right: 2px;
  border: 1px solid #ccc;
  background-color: #e2e2e2;
}

.view-group svg {
  width: 16px;
  height: 16px;
}

.view-group select {
  flex: 1;
  height: 16px;
}

.numbers {
  display: flex;
}

.numbers button {
  width: 14px;
  height: 18px;
  border-right: 1px solid #555;
}

.numbers button:last-child {
  border-right-color: #ccc;
}

.numbers .on {
  background-color: #75a9d7;
}

.grip.wide {
  margin: 0 3px 0 4px;
}

.snap {
  width: 24px;
  height: 24px;
}

.snap svg {
  width: 24px;
  height: 24px;
}

.accu {
  margin-right: 4px;
  background-color: #6ea8dd;
}

.near {
  background: repeating-conic-gradient(#4b81b6 0 25%, #78a5cd 0 50%) 0 0 / 2px 2px;
}

/* status bar */
.status {
  flex: none;
  height: 28px;
  display: flex;
  align-items: center;
  padding: 1px 2px 2px 2px;
  border-bottom: 1px solid #333;
  white-space: nowrap;
}

.prompt {
  flex: none;
  margin-right: 2px;
}

.info {
  width: 26px;
  height: 22px;
  padding-left: 4px;
  border-right: 1px solid #999;
}

.message {
  flex: 1;
  padding-left: 2px;
}

.status svg {
  width: 18px;
  height: 20px;
}

.cell {
  flex: none;
  width: 27px;
  height: 22px;
  display: flex;
  align-items: center;
  padding-left: 4px;
  border-left: 1px solid #999;
}

.level-name {
  width: 117px;
}

.set-count {
  width: 91px;
  gap: 5px;
}

.coords {
  width: 182px;
  padding-left: 2px;
}
```
